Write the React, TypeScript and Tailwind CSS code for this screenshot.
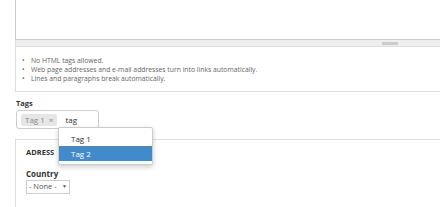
export default function App() {
  return (
    <div className="relative h-[207px] w-[440px] overflow-hidden bg-white font-['Open_Sans',sans-serif] text-[#333]">
      {/* editor */}
      <div className="ml-[15px] h-[40px] border-b border-l border-[#ccc] bg-white" />
      <div className="ml-[15px] flex h-[6px] justify-end border-l border-[#ddd] bg-[#eee] pr-[42px]">
        <div className="mt-[1.5px] h-[3px] w-[16px] bg-[#ccc]" />
      </div>

      {/* help */}
      <div className="ml-[15px] border-y border-l border-[#ddd] pb-[8px] pl-[6px] pt-[9px]">
        <ul className="text-[6.8px] leading-[9px] text-[#666]">
          {[
            "No HTML tags allowed.",
            "Web page addresses and e-mail addresses turn into links automatically.",
            "Lines and paragraphs break automatically.",
          ].map((t) => (
            <li key={t} className="flex">
              <span className="w-[9px]">•</span>
              <span>{t}</span>
            </li>
          ))}
        </ul>
      </div>

      {/* tags */}
      <div className="ml-[16px] mt-[6px]">
        <div className="text-[7.5px] font-bold leading-[10px]">Tags</div>
        <div className="mt-[2px] flex h-[19px] w-[83px] items-center rounded-[3px] border border-[#ccc] pl-[4px]">
          <span className="flex h-[12px] items-center rounded-[2px] bg-[#e6e6e6] px-[4px] text-[8px] text-[#888]">
            Tag 1 <span className="ml-[4px]">×</span>
          </span>
          <span className="ml-[8px] text-[8px] text-[#333]">tag</span>
        </div>
      </div>

      {/* fieldset */}
      <div className="ml-[15px] mt-[10px] h-[80px] border-l border-t border-[#ddd] pl-[10px] pt-[7px]">
        <div className="text-[7.5px] font-bold leading-[10px]">ADRESS</div>
        <div className="mt-[12px] text-[8px] font-bold leading-[10px]">Country</div>
        <div className="mt-[1px] flex h-[14px] w-[44px] items-center justify-between border border-[#ccc] px-[2px] text-[7.5px] text-[#555]">
          <span>- None -</span>
          <span className="text-[5px]">▼</span>
        </div>
      </div>

      {/* autocomplete */}
      <div className="absolute left-[58px] top-[127px] w-[95px] rounded-[2px] border border-[#ccc] bg-white py-[3px] shadow-[0_2px_5px_rgba(0,0,0,0.2)]">
        <div className="flex h-[15px] items-center pl-[12px] text-[8px] text-[#333]">Tag 1</div>
        <div className="flex h-[15px] items-center bg-[#428bca] pl-[12px] text-[8px] text-white">Tag 2</div>
      </div>
    </div>
  );
}
